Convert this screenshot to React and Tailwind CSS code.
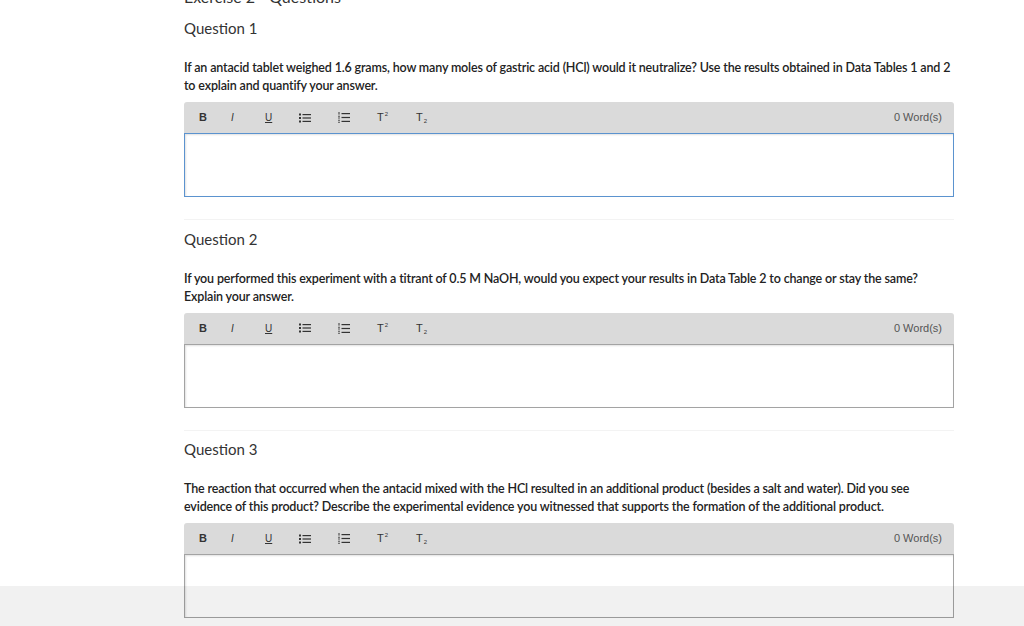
import React from 'react';

const questions = [
    {
        title: 'Question 1',
        text: 'If an antacid tablet weighed 1.6 grams, how many moles of gastric acid (HCl) would it neutralize? Use the results obtained in Data Tables 1 and 2 to explain and quantify your answer.',
        focused: true,
    },
    {
        title: 'Question 2',
        text: 'If you performed this experiment with a titrant of 0.5 M NaOH, would you expect your results in Data Table 2 to change or stay the same? Explain your answer.',
    },
    {
        title: 'Question 3',
        text: 'The reaction that occurred when the antacid mixed with the HCl resulted in an additional product (besides a salt and water). Did you see evidence of this product? Describe the experimental evidence you witnessed that supports the formation of the additional product.',
    },
];

function BulletIcon() {
    return (
        <svg width="12" height="10" viewBox="0 0 12 10" fill="#333">
            <rect x="0" y="0.5" width="2" height="2" />
            <rect x="0" y="4" width="2" height="2" />
            <rect x="0" y="7.5" width="2" height="2" />
            <rect x="3.5" y="1" width="8.5" height="1.2" />
            <rect x="3.5" y="4.4" width="8.5" height="1.2" />
            <rect x="3.5" y="7.8" width="8.5" height="1.2" />
        </svg>
    );
}

function NumberIcon() {
    return (
        <svg width="12" height="11" viewBox="0 0 12 11" fill="#333">
            <rect x="0.5" y="0" width="1" height="2.6" />
            <rect x="0" y="3.8" width="2" height="0.8" />
            <rect x="0" y="5.6" width="2" height="0.8" />
            <rect x="0" y="7.8" width="2" height="0.8" />
            <rect x="0" y="9.8" width="2" height="0.8" />
            <rect x="3.5" y="1" width="8.5" height="1.2" />
            <rect x="3.5" y="4.9" width="8.5" height="1.2" />
            <rect x="3.5" y="8.8" width="8.5" height="1.2" />
        </svg>
    );
}

function Toolbar() {
    return (
        <div className="flex items-center h-[31px] bg-[#dadada] rounded-t-[3px] pl-[15px] pr-[12px] text-[#333] font-['Liberation_Sans',sans-serif]">
            <span className="w-[32px] text-[11px] font-bold">B</span>
            <span className="w-[34px] text-[10px] italic">I</span>
            <span className="w-[34px] text-[10px] underline">U</span>
            <span className="w-[39px] flex"><BulletIcon /></span>
            <span className="w-[39px] flex"><NumberIcon /></span>
            <span className="w-[39px] flex items-start text-[11px] leading-none">
                T<span className="text-[6px] leading-none ml-[1px] -mt-[1px]">2</span>
            </span>
            <span className="flex items-end text-[11px] leading-none">
                T<span className="text-[6px] leading-none ml-[1px] -mb-[1px]">2</span>
            </span>
            <span className="ml-auto text-[11px] text-[#555]">0 Word(s)</span>
        </div>
    );
}

function QuestionBlock({ q }) {
    return (
        <div>
            <h2 className="text-[15px] leading-[20px] text-[#333]">{q.title}</h2>
            <p className="mt-[21px] text-[12.5px] leading-[18px] text-[#222] font-semibold tracking-[-0.16px]">{q.text}</p>
            <div className="mt-[7px]">
                <Toolbar />
                <div
                    className={
                        q.focused
                            ? 'h-[64px] bg-white border border-[#5b93cf] shadow-[inset_1px_1px_2px_rgba(0,0,0,0.12)]'
                            : 'h-[64px] bg-white border border-[#a3a3a3] shadow-[inset_1px_1px_2px_rgba(0,0,0,0.12)]'
                    }
                />
            </div>
            <div className="mt-[22px] h-px bg-[#f3f3f3]" />
            <div className="h-[8.5px]" />
        </div>
    );
}

export default function App() {
    return (
        <div className="h-[626px] overflow-hidden bg-white font-['Lato',sans-serif] relative">
            <div className="w-[770px] ml-[184px]">
                <div className="-mt-[13px] h-[21px] text-[16px] leading-[20px] text-[#333]">Exercise 2 - Questions</div>
                <div className="mt-[10px]">
                    {questions.map((q) => (
                        <QuestionBlock key={q.title} q={q} />
                    ))}
                </div>
            </div>
            <div className="absolute left-0 right-0 bottom-0 h-[40px] bg-black/[0.055]" />
        </div>
    );
}
